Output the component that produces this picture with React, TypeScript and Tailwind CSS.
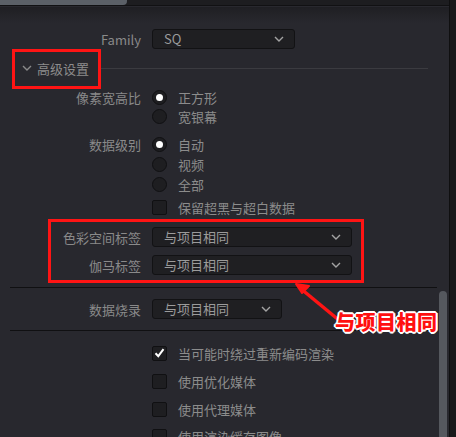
import React from 'react';

const cjk = "font-['Noto_Sans_CJK_SC','Noto_Sans',sans-serif]";

function Chevron({ className = '' }: { className?: string }) {
  return (
    <svg width="10" height="6" viewBox="0 0 10 6" className={className}>
      <path d="M1 1l4 4 4-4" fill="none" stroke="currentColor" strokeWidth="1.4" />
    </svg>
  );
}

function Select({ value, width }: { value: string; width: string }) {
  return (
    <div
      className={`${width} h-5 flex items-center justify-between pl-[11px] pr-[10px] rounded-[3px] bg-[#1f1f22] border border-[#121214] text-[#9b9b9b] text-[13px]`}
    >
      <span>{value}</span>
      <Chevron className="text-[#a3a3a3]" />
    </div>
  );
}

function Radio({ checked }: { checked?: boolean }) {
  return (
    <div className="w-[15px] h-[15px] rounded-full bg-[#1e1e21] border border-[#101012] flex items-center justify-center">
      {checked && <div className="w-[7px] h-[7px] rounded-full bg-white" />}
    </div>
  );
}

function Check({ checked }: { checked?: boolean }) {
  return (
    <div className="w-[15px] h-[15px] rounded-[2px] bg-[#1e1e21] border border-[#101012] flex items-center justify-center">
      {checked && (
        <svg width="11" height="10" viewBox="0 0 11 10">
          <path d="M1.5 5.2l2.8 3 5.2-7" fill="none" stroke="#fff" strokeWidth="2" />
        </svg>
      )}
    </div>
  );
}

function Row({ label, children, className = '' }: { label?: string; children: React.ReactNode; className?: string }) {
  return (
    <div className={`flex items-center gap-[11px] ${className}`}>
      <div className="w-[141px] text-right text-[#8a8a8a] text-[13px] leading-none">{label}</div>
      <div className="flex items-center">{children}</div>
    </div>
  );
}

function Option({ control, text, className = '' }: { control: React.ReactNode; text: string; className?: string }) {
  return (
    <div className={`flex items-center gap-[11px] ml-[152px] h-5 ${className}`}>
      {control}
      <span className="text-[#8c8c8c] text-[13px] leading-none">{text}</span>
    </div>
  );
}

export default function App() {
  return (
    <div className={`relative w-[456px] h-[437px] overflow-hidden bg-[#28282e] ${cjk}`}>
      <div className="flex h-full">
        <div className="relative flex-1 flex flex-col">
          {/* top strip */}
          <div className="h-[7px] bg-[#1d1d20] border-b border-[#111113] flex">
            <div className="w-[127px] h-[5px] bg-[#5b6067] rounded-br-[4px]" />
          </div>
          <div className="absolute left-0 right-0 top-[7px] h-[16px] bg-gradient-to-b from-[#1f1f23] to-[#28282e]" />

          <div className="relative flex flex-col">
            <Row label="Family" className="mt-[23px] h-5">
              <Select value="SQ" width="w-[143px]" />
            </Row>

            <div className="mt-[9px] h-5 flex items-center">
              <Chevron className="ml-[22px] text-[#8a8a8a]" />
              <span className="ml-[5px] text-[#8c8c8c] text-[13px] leading-none">高级设置</span>
              <div className="ml-[12px] w-[327px] h-px bg-[#3b3b40]" />
            </div>

            <Row label="像素宽高比" className="mt-[10px] h-[19px]">
              <div className="flex items-center gap-[11px]">
                <Radio checked />
                <span className="text-[#8c8c8c] text-[13px] leading-none">正方形</span>
              </div>
            </Row>
            <Option control={<Radio />} text="宽银幕" className="h-[19px]" />

            <Row label="数据级别" className="mt-[8px] h-5">
              <div className="flex items-center gap-[11px]">
                <Radio checked />
                <span className="text-[#8c8c8c] text-[13px] leading-none">自动</span>
              </div>
            </Row>
            <Option control={<Radio />} text="视频" />
            <Option control={<Radio />} text="全部" />
            <Option control={<Check />} text="保留超黑与超白数据" className="mt-[3px]" />

            <Row label="色彩空间标签" className="mt-[10px] h-5">
              <Select value="与项目相同" width="w-[200px]" />
            </Row>
            <Row label="伽马标签" className="mt-[8px] h-5">
              <Select value="与项目相同" width="w-[200px]" />
            </Row>

            <div className="mt-[12px] ml-[10px] mr-[12px] h-px bg-[#101012]" />

            <Row label="数据烧录" className="mt-[11px] h-5">
              <Select value="与项目相同" width="w-[130px]" />
            </Row>

            <div className="mt-[11px] ml-[10px] mr-[12px] h-px bg-[#101012]" />

            <Option control={<Check checked />} text="当可能时绕过重新编码渲染" className="mt-[12px]" />
            <Option control={<Check />} text="使用优化媒体" className="mt-[8px]" />
            <Option control={<Check />} text="使用代理媒体" className="mt-[8px]" />
            <Option control={<Check />} text="使用渲染缓存图像" className="mt-[7px]" />
          </div>

          {/* scrollbar */}
          <div className="absolute right-[2px] top-[291px] bottom-0 w-[8px] rounded-t-full bg-[#55585e]" />
        </div>
        <div className="w-[7px] bg-[#19191b] border-l border-[#0f0f10]" />
      </div>

      {/* annotations */}
      <div className="absolute left-[12px] top-[49px] w-[89px] h-[40px] border-[3px] border-[#ff1414]" />
      <div className="absolute left-[48px] top-[219px] w-[316px] h-[64px] border-[3px] border-[#ff1414]" />
      <svg className="absolute left-0 top-0" width="456" height="437" viewBox="0 0 456 437">
        <path d="M300 288L346 326" stroke="#ff1414" strokeWidth="3.5" />
        <path d="M296 284l13 2-7 7z" fill="#ff1414" stroke="#ff1414" strokeWidth="2" strokeLinejoin="round" />
      </svg>
      <div className="absolute left-[335px] top-[312px] text-[20px] font-black leading-none tracking-[0.5px] text-[#ff1010] [text-shadow:0_0_2px_#fff,1px_1px_0_#fff,-1px_-1px_0_#fff,1px_-1px_0_#fff,-1px_1px_0_#fff,2px_0_0_#fff,-2px_0_0_#fff,0_2px_0_#fff,0_-2px_0_#fff]">
        与项目相同
      </div>
    </div>
  );
}
